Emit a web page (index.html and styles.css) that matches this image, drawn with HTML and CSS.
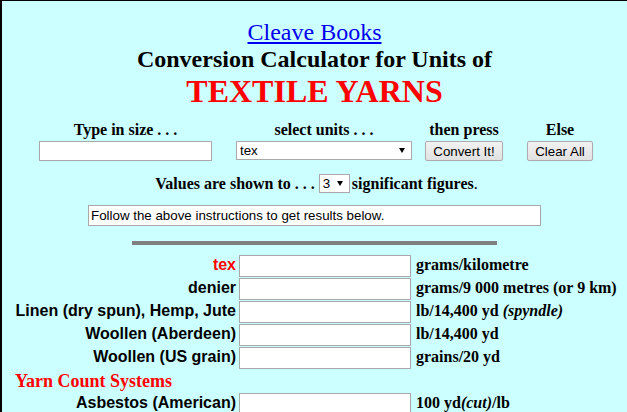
FILE: index.html
```html
<!DOCTYPE html>
<html lang="en">

<head>
    <meta charset="UTF-8">
    <meta name="viewport" content="width=device-width, initial-scale=1.0">
    <title>Textile Yarns - Conversion Calculator</title>
    <link rel="stylesheet" href="styles.css">
</head>

<body>
    <div class="masthead">
        <a class="site-link" href="#">Cleave Books</a>
        <h1 class="title">Conversion Calculator for Units of</h1>
        <h2 class="subject">TEXTILE YARNS</h2>
    </div>

    <form class="calc" onsubmit="return false">
        <div class="controls">
            <div class="cell">
                <label class="cell-label" for="size">Type in size . . .</label>
                <input class="field size-field" type="text" id="size">
            </div>
            <div class="cell">
                <label class="cell-label" for="units">select units . . .</label>
                <div class="pick units-pick">
                    <select class="pick-box" id="units">
                        <option>tex</option>
                        <option>denier</option>
                        <option>Linen (dry spun), Hemp, Jute</option>
                        <option>Woollen (Aberdeen)</option>
                        <option>Woollen (US grain)</option>
                        <option>Asbestos (American)</option>
                    </select>
                </div>
            </div>
            <div class="cell cell-press">
                <span class="cell-label">then press</span>
                <button class="btn convert-btn" type="button">Convert It!</button>
            </div>
            <div class="cell">
                <span class="cell-label">Else</span>
                <button class="btn clear-btn" type="reset">Clear All</button>
            </div>
        </div>

        <p class="precision">
            Values are shown to . . .
            <span class="pick digits-pick">
                <select class="pick-box">
                    <option>1</option>
                    <option>2</option>
                    <option selected>3</option>
                    <option>4</option>
                    <option>5</option>
                </select>
            </span>significant figures<span class="stop">.</span>
        </p>

        <input class="field message" type="text" readonly value="Follow the above instructions to get results below.">

        <hr class="rule">

        <div class="results">
            <label class="row-label row-label-base">tex</label>
            <input class="field result" type="text">
            <span class="row-unit">grams/kilometre</span>

            <label class="row-label">denier</label>
            <input class="field result" type="text">
            <span class="row-unit">grams/9 000 metres (or 9 km)</span>

            <label class="row-label">Linen (dry spun), Hemp, Jute</label>
            <input class="field result" type="text">
            <span class="row-unit">lb/14,400 yd <i>(spyndle)</i></span>

            <label class="row-label">Woollen (Aberdeen)</label>
            <input class="field result" type="text">
            <span class="row-unit">lb/14,400 yd</span>

            <label class="row-label">Woollen (US grain)</label>
            <input class="field result" type="text">
            <span class="row-unit">grains/20 yd</span>

            <h3 class="group-title">Yarn Count Systems</h3>

            <label class="row-label">Asbestos (American)</label>
            <input class="field result" type="text">
            <span class="row-unit">100 yd<i>(cut)</i>/lb</span>
        </div>
    </form>
</body>

</html>
```

FILE: styles.css
```css
html {
    overflow: hidden;
}

body {
    margin: 0;
    min-height: 100vh;
    padding: 0 8px;
    border-left: 2px solid #000;
    border-top: 1px solid #000;
    background-color: #ccffff;
    font-family: "Liberation Serif", "Times New Roman", serif;
    color: #000;
}

/* heading block */
.masthead {
    padding-top: 18px;
    text-align: center;
}

.site-link {
    display: block;
    font-size: 24px;
    line-height: 27px;
    color: #0000ee;
}

.title {
    margin: 0;
    font-size: 24px;
    line-height: 27px;
    font-weight: bold;
}

.subject {
    margin: 0;
    font-size: 32px;
    line-height: 36px;
    font-weight: bold;
    color: #ff0000;
}

/* inputs, selects, buttons */
.field {
    box-sizing: border-box;
    margin: 0;
    padding: 1px 2px;
    border: 1px solid #a9a9a9;
    background: #fff;
    font-family: "Liberation Sans", Arial, sans-serif;
    font-size: 13.33px;
    color: #000;
}

.pick {
    position: relative;
    display: inline-block;
}

.pick-box {
    box-sizing: border-box;
    display: block;
    width: 100%;
    height: 100%;
    margin: 0;
    padding: 0 0 0 3px;
    border: 1px solid #a9a9a9;
    border-radius: 0;
    background: #fff;
    appearance: none;
    -webkit-appearance: none;
    font-family: "Liberation Sans", Arial, sans-serif;
    font-size: 13.33px;
    color: #000;
}

/* the little black arrow on the select */
.pick::after {
    content: "";
    position: absolute;
    right: 7px;
    top: 7px;
    border-left: 3px solid transparent;
    border-right: 3px solid transparent;
    border-top: 5px solid #000;
    pointer-events: none;
}

.btn {
    box-sizing: border-box;
    height: 20px;
    margin: 0;
    padding: 0 6px;
    border: 1px solid #adadad;
    border-radius: 2px;
    background: linear-gradient(#f2f2f2, #e1e1e1);
    font-family: "Liberation Sans", Arial, sans-serif;
    font-size: 13.33px;
    color: #000;
}

/* top row of controls */
.controls {
    display: flex;
    gap: 24px;
    margin-top: 12px;
    padding-left: 29px;
}

.cell {
    display: flex;
    flex-direction: column;
    align-items: center;
    gap: 2px;
}

.cell-press {
    margin-left: -11px;
}

.cell-label {
    font-size: 16px;
    line-height: 18px;
    font-weight: bold;
}

.size-field {
    width: 173px;
    height: 20px;
}

.units-pick {
    width: 176px;
    height: 19px;
}

.convert-btn {
    width: 78px;
}

.clear-btn {
    width: 66px;
}

.precision {
    display: flex;
    justify-content: center;
    align-items: center;
    gap: 4px;
    margin: 13px 0 0;
    padding-left: 4px;
    font-size: 16px;
    line-height: 19px;
    font-weight: bold;
}

.digits-pick {
    width: 31px;
    height: 19px;
    margin-right: -2px;
}

.stop {
    margin-left: -4px;
    font-weight: normal;
}

.message {
    display: block;
    width: 453px;
    height: 21px;
    margin: 12px auto 0;
}

.rule {
    width: 60%;
    height: 4px;
    margin: 15px auto 0;
    border: none;
    background-color: #808080;
}

/* result table */
.results {
    display: grid;
    grid-template-columns: 226px 172px 1fr;
    column-gap: 3px;
    row-gap: 1px;
    align-items: center;
    margin-top: 10px;
}

.row-label {
    padding-bottom: 3px;
    text-align: right;
    font-family: "Liberation Sans", Arial, sans-serif;
    font-size: 16px;
    font-weight: bold;
}

.row-label-base {
    color: #ff0000;
}

.result {
    height: 22px;
}

.row-unit {
    padding-left: 2px;
    padding-bottom: 2px;
    font-size: 16px;
    font-weight: bold;
    white-space: nowrap;
}

.group-title {
    grid-column: 1 / -1;
    margin: 0;
    padding-left: 5px;
    font-size: 18px;
    line-height: 22px;
    font-weight: bold;
    color: #ff0000;
}
```
